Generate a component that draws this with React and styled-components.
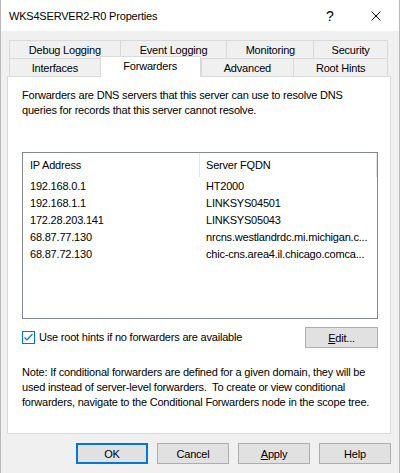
import styled, { createGlobalStyle } from 'styled-components';

const GlobalStyle = createGlobalStyle`
  html, body {
    margin: 0;
    padding: 0;
    background: #f0f0f0;
  }
  * {
    box-sizing: border-box;
  }
  body {
    font-family: "Liberation Sans", Arial, sans-serif;
    font-size: 11px;
    letter-spacing: -0.2px;
    color: #000;
  }
`;

const Window = styled.div`
  width: 400px;
  height: 473px;
  background: #f0f0f0;
  border-left: 1px solid #b9b9b9;
  border-right: 1px solid #b9b9b9;
  display: flex;
  flex-direction: column;
  overflow: hidden;
`;

const TitleBar = styled.div`
  height: 31px;
  background: #fff;
  display: flex;
  align-items: center;
  padding-left: 8px;
  flex-shrink: 0;
`;

const Title = styled.div`
  flex: 1;
  font-size: 11px;
`;

const TitleButton = styled.div`
  width: 46px;
  height: 31px;
  display: flex;
  align-items: center;
  justify-content: center;
  font-size: 14px;
  letter-spacing: 0;
`;

const Body = styled.div`
  flex: 1;
  padding: 9px 8px 0 6px;
  display: flex;
  flex-direction: column;
`;

const TabStrip = styled.div`
  padding: 0 3px 0 2px;
  display: flex;
  flex-direction: column;
`;

const TabRow = styled.div`
  display: flex;
  height: 18px;
`;

const Tab = styled.div`
  width: ${(p) => p.$w}px;
  height: ${(p) => (p.$active ? 21 : 18)}px;
  margin-top: ${(p) => (p.$active ? -2 : 0)}px;
  margin-bottom: ${(p) => (p.$active ? -1 : 0)}px;
  background: ${(p) => (p.$active ? '#fff' : '#f0f0f0')};
  border-top: 1px solid #d9d9d9;
  border-left: 1px solid #d9d9d9;
  border-right: ${(p) => (p.$last || p.$active ? '1px solid #d9d9d9' : 'none')};
  display: flex;
  align-items: center;
  justify-content: center;
  padding-bottom: ${(p) => (p.$active ? 2 : 0)}px;
  position: relative;
  z-index: ${(p) => (p.$active ? 2 : 0)};
  white-space: nowrap;
`;

const Panel = styled.div`
  height: 358px;
  background: #fff;
  border: 1px solid #d9d9d9;
  padding: 11px 12px 0 14px;
  display: flex;
  flex-direction: column;
`;

const Para = styled.p`
  margin: ${(p) => p.$mt || 0}px 0 0 0;
  line-height: 15px;
  white-space: nowrap;
`;

const ListView = styled.div`
  margin-top: 34px;
  height: 167px;
  border: 1px solid #828790;
  background: #fff;
  display: flex;
  flex-direction: column;
`;

const ListRow = styled.div`
  display: flex;
  height: ${(p) => (p.$header ? 24 : 17)}px;
  align-items: center;
`;

const Cell = styled.div`
  width: ${(p) => p.$w}px;
  height: 100%;
  display: flex;
  align-items: center;
  padding-left: ${(p) => p.$pl}px;
  white-space: nowrap;
  overflow: hidden;
  border-right: ${(p) => (p.$header ? '1px solid #e5e5e5' : 'none')};
`;

const OptionRow = styled.div`
  margin-top: 8px;
  height: 21px;
  display: flex;
  align-items: center;
  justify-content: space-between;
`;

const CheckLabel = styled.label`
  display: flex;
  align-items: center;
  gap: 4px;
  margin-top: -1px;
`;

const CheckBox = styled.span`
  width: 13px;
  height: 13px;
  border: 1px solid #0078d7;
  background: #fff;
  display: flex;
  align-items: center;
  justify-content: center;
`;

const Button = styled.button`
  width: ${(p) => p.$w || 72}px;
  height: 21px;
  padding: 0;
  font: inherit;
  letter-spacing: inherit;
  color: #000;
  background: #e1e1e1;
  border: ${(p) => (p.$default ? '2px solid #0078d7' : '1px solid #adadad')};
  display: flex;
  align-items: center;
  justify-content: center;
`;

const Footer = styled.div`
  padding-top: 9px;
  display: flex;
  justify-content: flex-end;
  gap: 9px;
`;

const rows = [
  ['192.168.0.1', 'HT2000'],
  ['192.168.1.1', 'LINKSYS04501'],
  ['172.28.203.141', 'LINKSYS05043'],
  ['68.87.77.130', 'nrcns.westlandrdc.mi.michigan.c...'],
  ['68.87.72.130', 'chic-cns.area4.il.chicago.comca...'],
];

const row1 = [
  ['Debug Logging', 111],
  ['Event Logging', 107],
  ['Monitoring', 87],
  ['Security', 75],
];

const row2 = [
  ['Interfaces', 91],
  ['Forwarders', 101],
  ['Advanced', 93],
  ['Root Hints', 95],
];

export default function App() {
  return (
    <>
      <GlobalStyle />
      <Window>
        <TitleBar>
          <Title>WKS4SERVER2-R0 Properties</Title>
          <TitleButton>?</TitleButton>
          <TitleButton>
            <svg width="10" height="10" viewBox="0 0 10 10">
              <path d="M0.5 0.5 L9.5 9.5 M9.5 0.5 L0.5 9.5" stroke="#000" strokeWidth="1" />
            </svg>
          </TitleButton>
        </TitleBar>
        <Body>
          <TabStrip>
            <TabRow>
              {row1.map(([t, w], i) => (
                <Tab key={t} $w={w} $last={i === row1.length - 1}>
                  {t}
                </Tab>
              ))}
            </TabRow>
            <TabRow>
              {row2.map(([t, w], i) => (
                <Tab
                  key={t}
                  $w={w}
                  $last={i === row2.length - 1}
                  $active={t === 'Forwarders'}
                >
                  {t}
                </Tab>
              ))}
            </TabRow>
          </TabStrip>
          <Panel>
            <Para>
              Forwarders are DNS servers that this server can use to resolve DNS
              <br />
              queries for records that this server cannot resolve.
            </Para>
            <ListView>
              <ListRow $header>
                <Cell $w={177} $pl={7} $header>IP Address</Cell>
                <Cell $w={177} $pl={6} $header>Server FQDN</Cell>
              </ListRow>
              {rows.map(([ip, fqdn]) => (
                <ListRow key={ip}>
                  <Cell $w={177} $pl={7}>{ip}</Cell>
                  <Cell $w={177} $pl={6}>{fqdn}</Cell>
                </ListRow>
              ))}
            </ListView>
            <OptionRow>
              <CheckLabel>
                <CheckBox>
                  <svg width="11" height="11" viewBox="0 0 11 11">
                    <path d="M1.5 5.5 L4 8 L9.5 2" fill="none" stroke="#0078d7" strokeWidth="1.2" />
                  </svg>
                </CheckBox>
                Use root hints if no forwarders are available
              </CheckLabel>
              <Button $w={73}>
                <span><u>E</u>dit...</span>
              </Button>
            </OptionRow>
            <Para $mt={17}>
              Note: If conditional forwarders are defined for a given domain, they will be
              <br />
              used instead of server-level forwarders.&nbsp; To create or view conditional
              <br />
              forwarders, navigate to the Conditional Forwarders node in the scope tree.
            </Para>
          </Panel>
          <Footer>
            <Button $default>OK</Button>
            <Button>Cancel</Button>
            <Button><span><u>A</u>pply</span></Button>
            <Button>Help</Button>
          </Footer>
        </Body>
      </Window>
    </>
  );
}
